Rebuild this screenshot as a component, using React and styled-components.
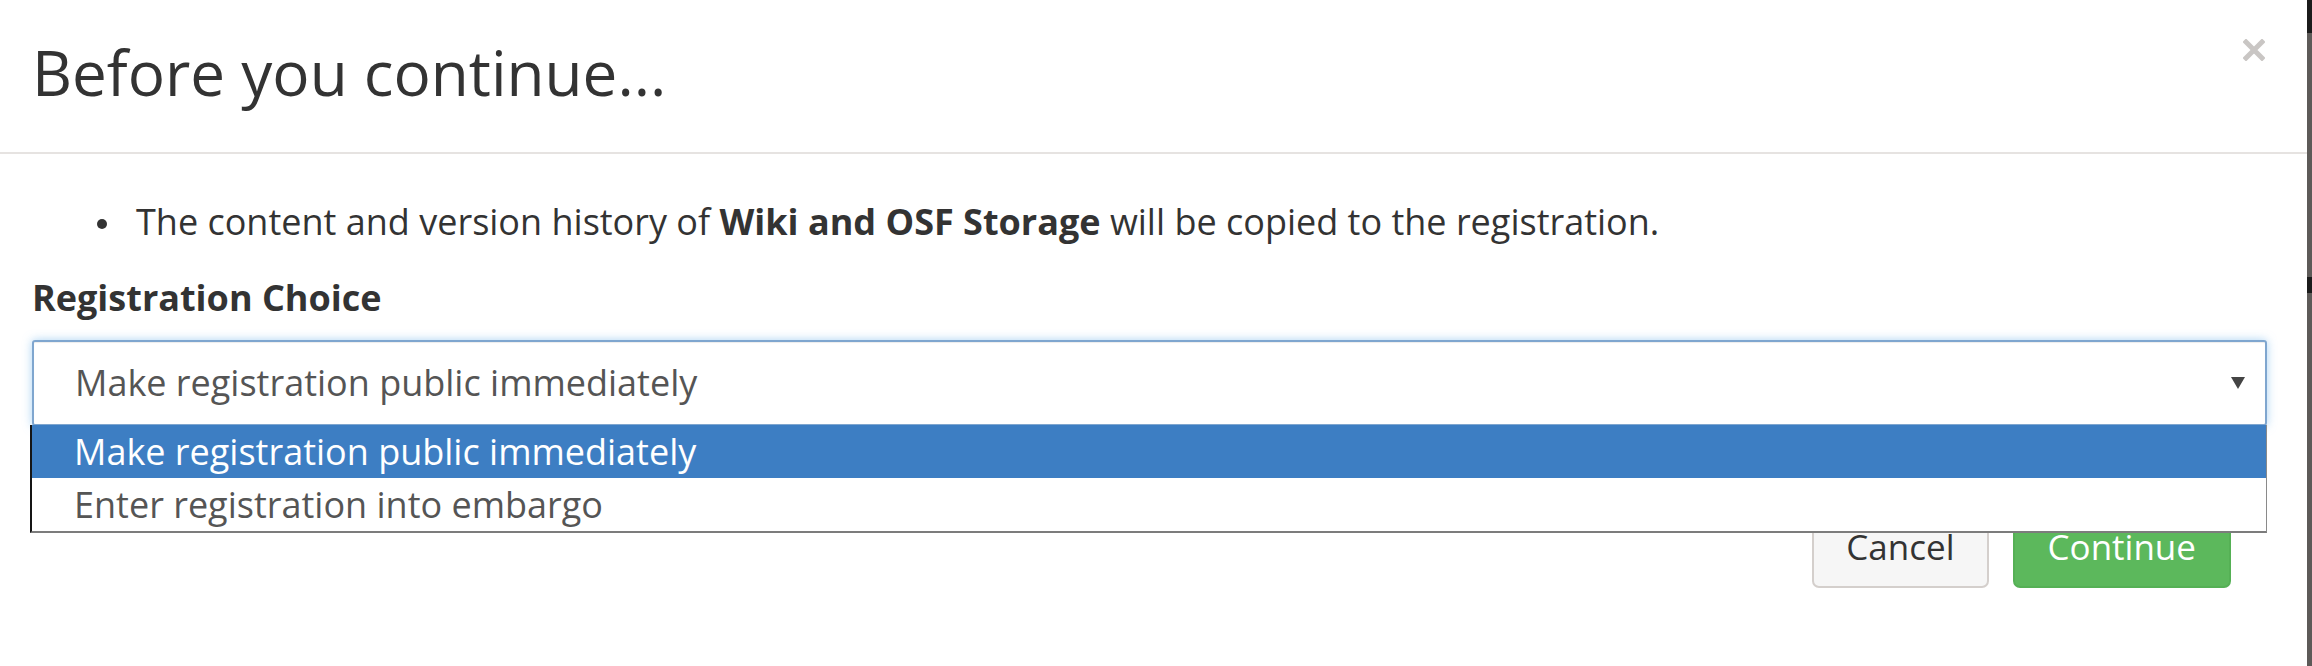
import React from 'react';
import styled, { createGlobalStyle } from 'styled-components';

const GlobalStyle = createGlobalStyle`
  html, body {
    margin: 0;
    padding: 0;
    background: #ffffff;
  }
  body {
    font-family: "Open Sans", "Liberation Sans", sans-serif;
    color: #333333;
  }
`

const Page = styled.div`
  display: flex;
  width: 2312px;
  height: 666px;
  overflow: hidden;
`

const Modal = styled.div`
  flex: 1;
  display: flex;
  flex-direction: column;
  background: #ffffff;
`

const Edge = styled.div`
  width: 5px;
  background: linear-gradient(
    to bottom,
    #1b1b1b 0 33px,
    #5d5a58 33px 277px,
    #1b1b1b 277px 293px,
    #5d5a58 293px
  );
`

const Header = styled.div`
  display: flex;
  justify-content: space-between;
  align-items: flex-start;
  height: 154px;
  padding: 31px 42px 0 32px;
  box-sizing: border-box;
  border-bottom: 2px solid #e6e3e1;
`

const Title = styled.h4`
  margin: 0;
  font-size: 62px;
  font-weight: 400;
  line-height: 83px;
  color: #333333;
`

const Close = styled.button`
  border: none;
  background: none;
  padding: 0;
  margin-top: 8px;
  width: 22px;
  height: 22px;
  cursor: pointer;
`

const Body = styled.div`
  display: flex;
  flex-direction: column;
  padding: 44px 40px 0 32px;
`

const List = styled.ul`
  margin: 0 0 28px;
  padding: 0;
  list-style: none;
`

const ListItem = styled.li`
  display: flex;
  align-items: center;
  font-size: 36px;
  line-height: 48px;
`

const Bullet = styled.span`
  width: 10px;
  height: 10px;
  border-radius: 50%;
  background: #333333;
  margin: 4px 29px 0 65px;
  flex-shrink: 0;
`

const Label = styled.label`
  font-size: 36px;
  font-weight: 700;
  line-height: 48px;
  margin-bottom: 18px;
`

const SelectWrap = styled.div`
  position: relative;
`

const SelectBox = styled.div`
  display: flex;
  align-items: center;
  justify-content: space-between;
  height: 86px;
  box-sizing: border-box;
  padding: 0 20px 0 41px;
  border: 2px solid #7fa6cf;
  border-radius: 3px;
  box-shadow: inset 0 1px 1px rgba(0, 0, 0, 0.075), 0 0 10px rgba(102, 175, 233, 0.55);
  font-size: 36px;
  line-height: 48px;
  color: #555555;
`

const Options = styled.div`
  position: absolute;
  top: 85px;
  left: -2px;
  right: 0;
  background: #ffffff;
  border-left: 2px solid #151515;
  border-right: 1px solid #8a8a8a;
  border-bottom: 2px solid #7c7c7c;
  z-index: 2;
`

const Option = styled.div`
  height: ${p => p.$h}px;
  display: flex;
  align-items: center;
  padding-left: 42px;
  font-size: 36px;
  color: ${p => (p.$active ? '#ffffff' : '#555555')};
  background: ${p => (p.$active ? '#3d7ec3' : '#ffffff')};
`

const Footer = styled.div`
  display: flex;
  justify-content: flex-end;
  gap: 24px;
  padding: 78px 76px 0 0;
`

const Button = styled.button`
  height: 84px;
  box-sizing: border-box;
  padding: 0 ${p => p.$px}px;
  font-family: "Open Sans", "Liberation Sans", sans-serif;
  font-size: 35px;
  border-radius: 7px;
  border: 2px solid ${p => (p.$primary ? '#55b055' : '#d4cfcc')};
  background: ${p => (p.$primary ? '#5cb85c' : '#f6f6f6')};
  color: ${p => (p.$primary ? '#ffffff' : '#333333')};
  cursor: pointer;
`

const App = () => {
  return (
    <>
      <GlobalStyle />
      <Page>
        <Modal>
          <Header>
            <Title>Before you continue...</Title>
            <Close aria-label="Close">
              <svg width="22" height="22" viewBox="0 0 22 22">
                <path d="M3 3 L19 19 M19 3 L3 19" stroke="#c9c6c4" strokeWidth="5" strokeLinecap="square" />
              </svg>
            </Close>
          </Header>
          <Body>
            <List>
              <ListItem>
                <Bullet />
                <span>
                  The content and version history of <b>Wiki and OSF Storage</b> will be copied to the registration.
                </span>
              </ListItem>
            </List>
            <Label>Registration Choice</Label>
            <SelectWrap>
              <SelectBox>
                <span>Make registration public immediately</span>
                <svg width="14" height="12" viewBox="0 0 14 12">
                  <path d="M0 0 H14 L7 12 Z" fill="#444444" />
                </svg>
              </SelectBox>
              <Options>
                <Option $active $h={53}>Make registration public immediately</Option>
                <Option $h={53}>Enter registration into embargo</Option>
              </Options>
            </SelectWrap>
          </Body>
          <Footer>
            <Button $px={32}>Cancel</Button>
            <Button $primary $px={33}>Continue</Button>
          </Footer>
        </Modal>
        <Edge />
      </Page>
    </>
  )
}

export default App
